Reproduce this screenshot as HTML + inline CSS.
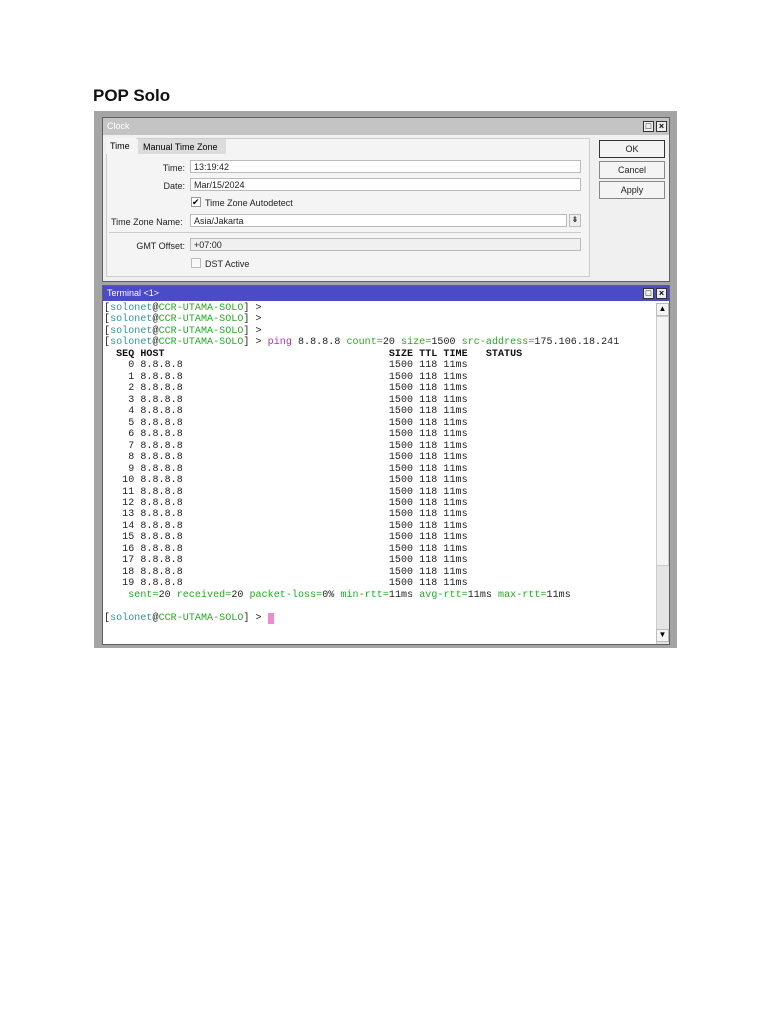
<!DOCTYPE html>
<html><head><meta charset="utf-8"><style>
*{margin:0;padding:0;box-sizing:border-box}
body{width:768px;height:1024px;background:#fff;position:relative;font-family:"Liberation Sans",sans-serif;overflow:hidden}
.a{position:absolute}
h1{position:absolute;left:93px;top:86px;font-size:17px;font-weight:bold;color:#111}
.frame{left:94px;top:111px;width:583px;height:537px;background:#a4a4a4}
.win{left:102px;top:117px;width:568px;height:165px;background:#f0f0f0;border:1px solid #606060}
.tb{left:0;top:0;width:100%;height:17px;background:#c4c4c4;color:#fff;font-size:9px;padding:3px 4px}
.ib{width:11px;height:11px;border:1px solid #333;background:#eee;font-size:9px;line-height:9px;text-align:center;font-weight:bold}
.lbl{font-size:9px;color:#222;text-align:right;width:80px}
.inp{height:13px;background:#fff;border:1px solid #bbb;font-size:9px;padding:1px 3px;color:#222}
.btn{left:496px;width:66px;height:18px;border:1px solid #888;background:#f4f4f4;font-size:9px;text-align:center;line-height:16px;color:#222}
.term{left:102px;top:285px;width:568px;height:360px;background:#fff;border:1px solid #606060}
.ttb{left:0;top:0;width:100%;height:15px;background:#4b4bc8;color:#fff;font-size:9px;padding:2px 4px}
pre{position:absolute;left:1px;top:17px;font-family:"Liberation Mono",monospace;font-size:10px;line-height:11.47px;color:#222;letter-spacing:0.06px}
.c{color:#2a9a9a}.g{color:#22aa22}.m{color:#b030b0}.k{color:#111;font-weight:bold}
</style></head><body>
<h1>POP Solo</h1>
<div class="a frame"></div>
<div class="a win">
 <div class="a tb">Clock</div>
 <div class="a ib" style="left:540px;top:3px">&#9633;</div>
 <div class="a ib" style="left:553px;top:3px">×</div>
 <div class="a" style="left:3px;top:20px;width:484px;height:139px;border:1px solid #ccc;background:#f4f4f4"></div>
 <div class="a" style="left:3px;top:20px;width:30px;height:16px;background:#f4f4f4;font-size:9px;padding:3px 4px">Time</div>
 <div class="a" style="left:35px;top:21px;width:88px;height:15px;background:#dcdcdc;font-size:9px;padding:3px 5px">Manual Time Zone</div>
 <div class="a lbl" style="left:2px;top:45px">Time:</div>
 <div class="a inp" style="left:87px;top:42px;width:391px">13:19:42</div>
 <div class="a lbl" style="left:2px;top:63px">Date:</div>
 <div class="a inp" style="left:87px;top:60px;width:391px">Mar/15/2024</div>
 <div class="a" style="left:88px;top:79px;width:10px;height:10px;border:1px solid #999;background:#fff;font-size:9px;line-height:8px">✔</div>
 <div class="a" style="left:102px;top:80px;font-size:9px;color:#222">Time Zone Autodetect</div>
 <div class="a lbl" style="left:0px;top:99px;width:82px;text-align:left;padding-left:8px">Time Zone Name:</div>
 <div class="a inp" style="left:87px;top:96px;width:377px">Asia/Jakarta</div>
 <div class="a" style="left:466px;top:96px;width:12px;height:13px;border:1px solid #bbb;background:#eee;font-size:8px;text-align:center">⇟</div>
 <div class="a" style="left:6px;top:114px;width:472px;border-top:1px solid #ccc"></div>
 <div class="a lbl" style="left:2px;top:123px">GMT Offset:</div>
 <div class="a inp" style="left:87px;top:120px;width:391px;background:#f0f0f0">+07:00</div>
 <div class="a" style="left:88px;top:140px;width:10px;height:10px;border:1px solid #bbb;background:#f8f8f8"></div>
 <div class="a" style="left:102px;top:141px;font-size:9px;color:#222">DST Active</div>
 <div class="btn a" style="top:22px;border:1px solid #333">OK</div>
 <div class="btn a" style="top:43px">Cancel</div>
 <div class="btn a" style="top:63px">Apply</div>
</div>
<div class="a term">
 <div class="a ttb">Terminal &lt;1&gt;</div>
 <div class="a ib" style="left:540px;top:2px">&#9633;</div>
 <div class="a ib" style="left:553px;top:2px">×</div>
 <div class="a" style="left:553px;top:17px;width:13px;height:341px;background:#e4e4e4;border-left:1px solid #ccc"></div>
 <div class="a" style="left:553px;top:17px;width:13px;height:13px;background:#f4f4f4;border:1px solid #bbb;font-size:8px;text-align:center">▲</div>
 <div class="a" style="left:553px;top:30px;width:13px;height:250px;background:#f4f4f4;border:1px solid #ccc"></div>
 <div class="a" style="left:553px;top:343px;width:13px;height:13px;background:#f4f4f4;border:1px solid #bbb;font-size:8px;text-align:center">▼</div>
<pre>[<span class="c">solonet</span>@<span class="g">CCR-UTAMA-SOLO</span>] &gt;
[<span class="c">solonet</span>@<span class="g">CCR-UTAMA-SOLO</span>] &gt;
[<span class="c">solonet</span>@<span class="g">CCR-UTAMA-SOLO</span>] &gt;
[<span class="c">solonet</span>@<span class="g">CCR-UTAMA-SOLO</span>] &gt; <span class="m">ping</span> 8.8.8.8 <span class="g">count=</span>20 <span class="g">size=</span>1500 <span class="g">src-address=</span>175.106.18.241
<span class="k">  SEQ HOST                                     SIZE TTL TIME   STATUS</span>
    0 8.8.8.8                                  1500 118 11ms
    1 8.8.8.8                                  1500 118 11ms
    2 8.8.8.8                                  1500 118 11ms
    3 8.8.8.8                                  1500 118 11ms
    4 8.8.8.8                                  1500 118 11ms
    5 8.8.8.8                                  1500 118 11ms
    6 8.8.8.8                                  1500 118 11ms
    7 8.8.8.8                                  1500 118 11ms
    8 8.8.8.8                                  1500 118 11ms
    9 8.8.8.8                                  1500 118 11ms
   10 8.8.8.8                                  1500 118 11ms
   11 8.8.8.8                                  1500 118 11ms
   12 8.8.8.8                                  1500 118 11ms
   13 8.8.8.8                                  1500 118 11ms
   14 8.8.8.8                                  1500 118 11ms
   15 8.8.8.8                                  1500 118 11ms
   16 8.8.8.8                                  1500 118 11ms
   17 8.8.8.8                                  1500 118 11ms
   18 8.8.8.8                                  1500 118 11ms
   19 8.8.8.8                                  1500 118 11ms
    <span class="g">sent=</span>20 <span class="g">received=</span>20 <span class="g">packet-loss=</span>0% <span class="g">min-rtt=</span>11ms <span class="g">avg-rtt=</span>11ms <span class="g">max-rtt=</span>11ms

[<span class="c">solonet</span>@<span class="g">CCR-UTAMA-SOLO</span>] &gt; <span style="background:#f08ad0">&nbsp;</span></pre>
</div>
</body></html>
